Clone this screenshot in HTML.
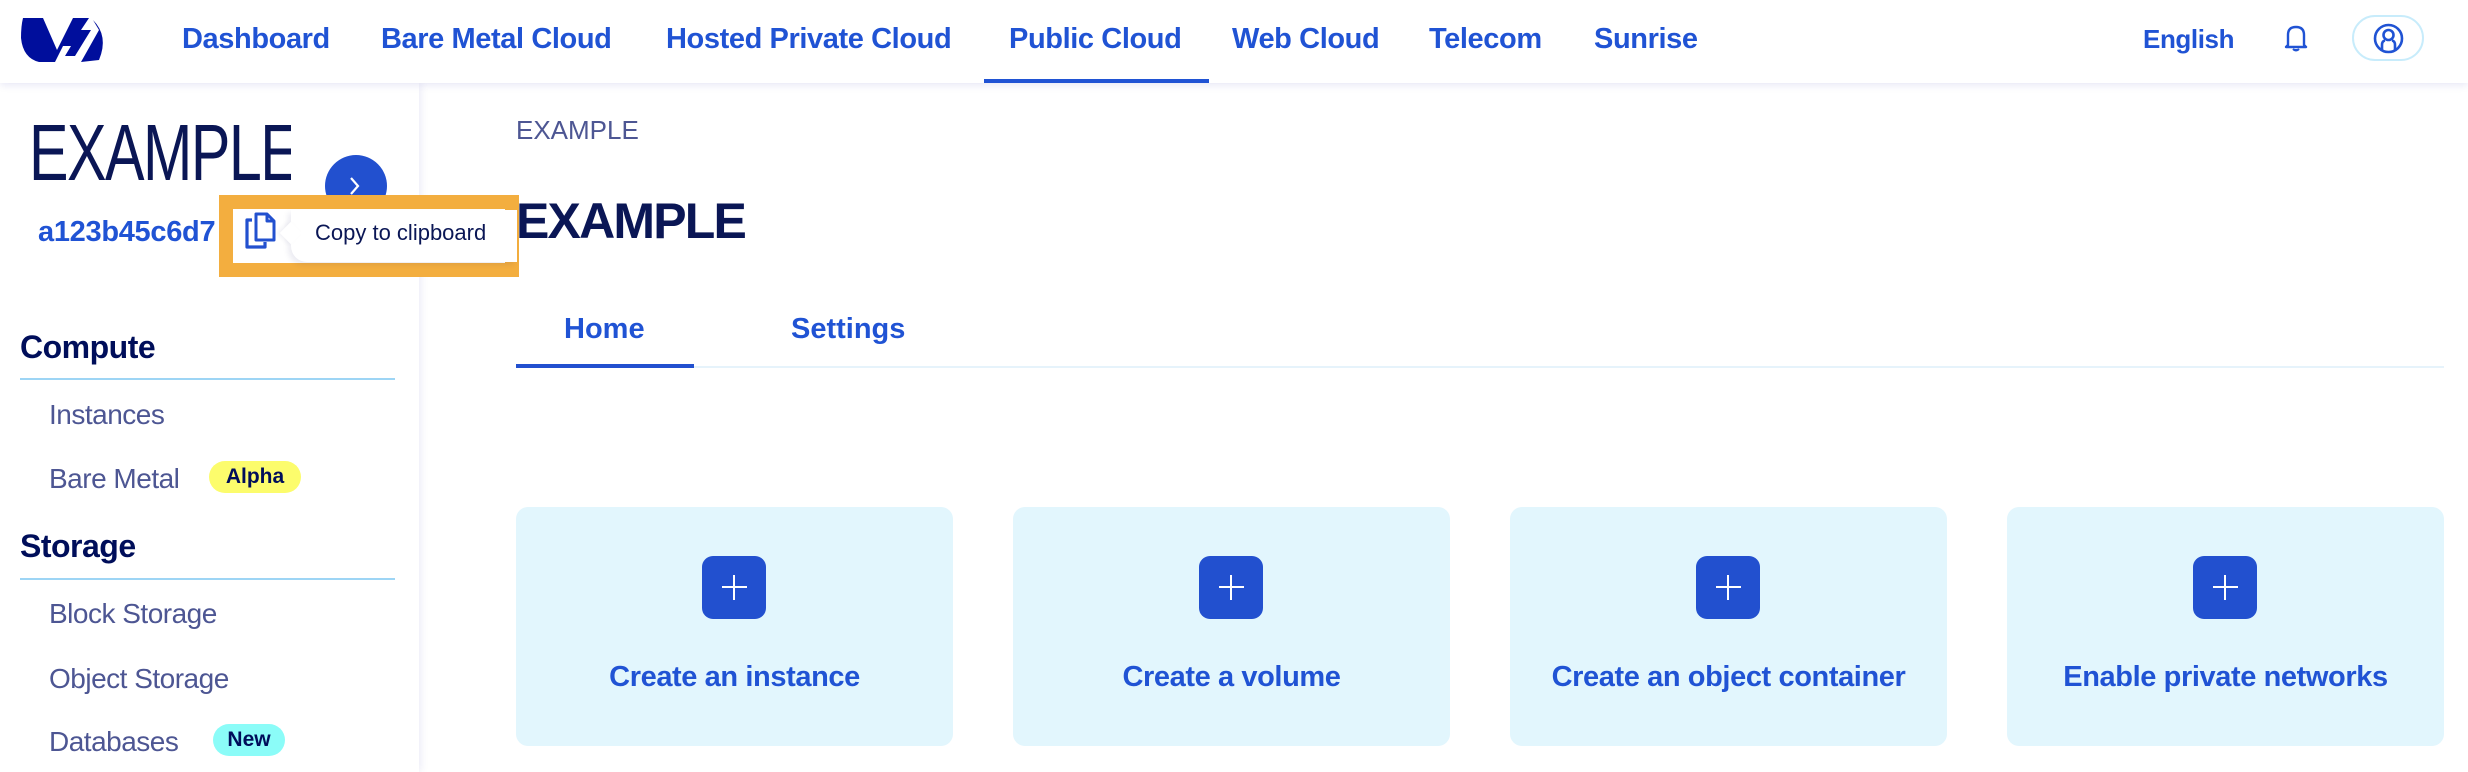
<!DOCTYPE html>
<html><head><meta charset="utf-8"><style>
*{margin:0;padding:0;box-sizing:border-box}
body{width:2468px;height:772px;overflow:hidden;background:#fff;font-family:"Liberation Sans",sans-serif;position:relative}
.a{position:absolute;white-space:nowrap}
.hdr{position:absolute;left:0;top:0;width:2468px;height:83px;background:#fff;box-shadow:0 2px 8px rgba(0,14,156,.10);z-index:3}
.nav{position:absolute;top:23px;font-weight:bold;font-size:29px;color:#2053d4;letter-spacing:-0.4px}
.side{position:absolute;left:0;top:83px;width:419px;height:689px;background:#fff;box-shadow:2px 0 8px rgba(0,14,156,.08);z-index:1}
.item{position:absolute;left:49px;font-size:28px;color:#4d5693;letter-spacing:-0.5px}
.sec{position:absolute;left:20px;font-size:32px;font-weight:bold;color:#000e5a;letter-spacing:-0.5px}
.rule{position:absolute;left:20px;width:375px;height:2px;background:#9dd5f5}
.badge{position:absolute;height:32px;border-radius:16px;font-weight:bold;font-size:21px;color:#000e5a;text-align:center;line-height:32px}
.card{position:absolute;top:507px;width:437px;height:239px;background:#e2f6fd;border-radius:12px}
.plus{position:absolute;left:186px;top:49px;width:64px;height:63px;background:#2250cf;border-radius:11px}
.plus:before{content:"";position:absolute;left:31px;top:19px;width:2px;height:25px;background:#fff}
.plus:after{content:"";position:absolute;left:20px;top:30px;width:25px;height:2px;background:#fff}
.clab{position:absolute;left:0;width:100%;top:154px;text-align:center;font-weight:bold;font-size:29px;color:#2053d4;letter-spacing:-0.4px}
</style></head><body>
<div class="hdr">
<svg class="a" style="left:19px;top:16px" width="90" height="48" viewBox="0 0 90 48"><path d="M4 2 L24 2 L38 34 L54 2 L70 2 L62 14 L72 14 L56 40 L46 40 L52 30 L44 30 L36 46 L20 46 Q4 42 2 22 Q2 10 4 2Z" fill="#000e9c"/><path d="M74 4 Q90 20 80 44 L62 46 L80 14Z" fill="#000e9c"/></svg>
<div class="nav" style="left:182px">Dashboard</div>
<div class="nav" style="left:381px">Bare Metal Cloud</div>
<div class="nav" style="left:666px">Hosted Private Cloud</div>
<div class="nav" style="left:1009px">Public Cloud</div>
<div class="nav" style="left:1232px">Web Cloud</div>
<div class="nav" style="left:1429px">Telecom</div>
<div class="nav" style="left:1594px">Sunrise</div>
<div class="a" style="left:984px;top:79px;width:225px;height:4px;background:#2053d4"></div>
<div class="nav" style="left:2143px;top:24px;font-size:26px">English</div>
<svg class="a" style="left:2283px;top:24px" width="26" height="28" viewBox="0 0 26 28"><path d="M5 21 L5 11 Q5 3 13 3 Q21 3 21 11 L21 21 L23 23 L3 23 Z" fill="none" stroke="#2053d4" stroke-width="2.4" stroke-linejoin="round"/><path d="M10 25 Q13 28 16 25" fill="#2053d4" stroke="#2053d4" stroke-width="2"/></svg>
<div class="a" style="left:2352px;top:15px;width:72px;height:46px;border:2px solid #c8ecfb;border-radius:23px"></div>
<svg class="a" style="left:2373px;top:23px" width="31" height="31" viewBox="0 0 31 31"><circle cx="15.5" cy="15.5" r="13.5" fill="none" stroke="#2053d4" stroke-width="2.6"/><circle cx="15.5" cy="12" r="5" fill="none" stroke="#2053d4" stroke-width="2.6"/><path d="M9 27 L9 22 Q9 18 12 17.5 M22 27 L22 22 Q22 18 19 17.5" fill="none" stroke="#2053d4" stroke-width="2.6"/></svg>
</div>

<div class="side">
<div class="a" style="left:29px;top:30px;width:262px;overflow:hidden;height:80px"><div style="font-size:80px;color:#0a1655;letter-spacing:-2px;transform:scaleX(0.74);transform-origin:0 0;line-height:80px">EXAMPLE</div></div>
<div class="a" style="left:325px;top:72px;width:62px;height:62px;border-radius:50%;background:#2250cf"></div>
<svg class="a" style="left:348px;top:92px" width="14" height="22" viewBox="0 0 14 22"><path d="M3 3 L10 11 L3 19" fill="none" stroke="#fff" stroke-width="2.2"/></svg>
<div class="a" style="left:38px;top:133px;font-size:29px;font-weight:bold;color:#2053d4;letter-spacing:-0.3px">a123b45c6d7</div>
<div class="sec" style="top:246px">Compute</div>
<div class="rule" style="top:295px"></div>
<div class="item" style="top:316px">Instances</div>
<div class="item" style="top:380px">Bare Metal</div>
<div class="badge" style="left:209px;top:378px;width:92px;background:#fcfc6c">Alpha</div>
<div class="sec" style="top:445px">Storage</div>
<div class="rule" style="top:495px"></div>
<div class="item" style="top:515px">Block Storage</div>
<div class="item" style="top:580px">Object Storage</div>
<div class="item" style="top:643px">Databases</div>
<div class="badge" style="left:213px;top:641px;width:72px;background:#8bfcf8">New</div>
</div>

<div class="a" style="left:219px;top:195px;width:300px;height:82px;border:14px solid #f3ae3f;background:#fff;z-index:4">
<svg class="a" style="left:10px;top:2px" width="34" height="40" viewBox="0 0 34 40"><path d="M13 3 L24 3 L31 10 L31 29 L13 29 Z M24 3 L24 10 L31 10" fill="none" stroke="#2250cf" stroke-width="3" stroke-linejoin="round"/><path d="M9 9 L4 9 L4 36 L22 36 L22 31" fill="none" stroke="#2250cf" stroke-width="3.2" stroke-linejoin="round"/></svg>
<div class="a" style="left:58px;top:1px;width:226px;height:52px;background:#fff;border-radius:0 0 0 16px;box-shadow:-3px 3px 6px rgba(0,14,90,.08)"></div>
<div class="a" style="left:50px;top:16px;width:16px;height:16px;background:#fff;transform:rotate(45deg);box-shadow:-2px 2px 4px rgba(0,14,90,.06)"></div>
<div class="a" style="left:82px;top:11px;font-size:22px;color:#0a1655">Copy to clipboard</div>
</div>

<div class="a" style="left:516px;top:115px;font-size:26px;color:#4d5693">EXAMPLE</div>
<div class="a" style="left:516px;top:192px;font-size:50px;font-weight:bold;color:#0a1655;letter-spacing:-1.8px">EXAMPLE</div>
<div class="a" style="left:516px;top:366px;width:1928px;height:2px;background:#e6f3fb"></div>
<div class="a" style="left:516px;top:364px;width:178px;height:4px;background:#2250cf"></div>
<div class="a" style="left:564px;top:313px;font-size:29px;font-weight:bold;color:#2053d4">Home</div>
<div class="a" style="left:791px;top:313px;font-size:29px;font-weight:bold;color:#2053d4">Settings</div>

<div class="card" style="left:516px"><div class="plus"></div><div class="clab">Create an instance</div></div>
<div class="card" style="left:1013px"><div class="plus"></div><div class="clab">Create a volume</div></div>
<div class="card" style="left:1510px"><div class="plus"></div><div class="clab">Create an object container</div></div>
<div class="card" style="left:2007px"><div class="plus"></div><div class="clab">Enable private networks</div></div>
</body></html>
